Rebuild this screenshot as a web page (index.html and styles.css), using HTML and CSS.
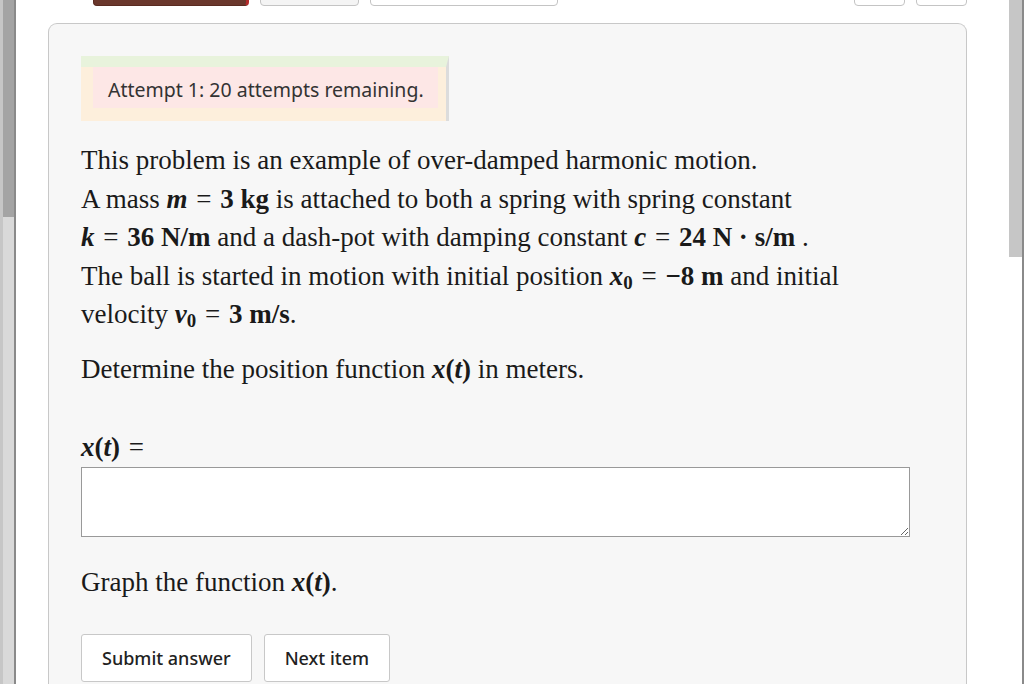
FILE: index.html
```html
<!DOCTYPE html>
<html lang="en">
<head>
    <meta charset="UTF-8">
    <meta name="viewport" content="width=device-width, initial-scale=1.0">
    <title>Over-damped harmonic motion</title>
    <link rel="stylesheet" href="styles.css">
</head>
<body>
    <div class="frame">
        <div class="side-rail"><div class="rail-thumb"></div></div>

        <div class="main">
            <div class="toolbar">
                <span class="tool tool-primary"></span>
                <span class="tool tool-small"></span>
                <span class="tool tool-wide"></span>
                <span class="spacer"></span>
                <span class="tool tool-icon"></span>
                <span class="tool tool-icon"></span>
            </div>

            <div class="card">
                <div class="attempts">
                    <span class="attempts-text">Attempt 1: 20 attempts remaining.</span>
                </div>

                <p class="problem">
                    This problem is an example of over-damped harmonic motion.<br>
                    A mass <span class="mi">m</span> <span class="mo">=</span> <span class="mn">3 kg</span> is attached to both a spring with spring constant<br>
                    <span class="mi">k</span> <span class="mo">=</span> <span class="mn">36 N/m</span> and a dash-pot with damping constant <span class="mi">c</span> <span class="mo">=</span> <span class="mn">24 N · s/m</span> .<br>
                    The ball is started in motion with initial position <span class="mi">x</span><sub class="mn">0</sub> <span class="mo">=</span> <span class="mn">−8 m</span> and initial<br>
                    velocity <span class="mi">v</span><sub class="mn">0</sub> <span class="mo">=</span> <span class="mn">3 m/s</span>.
                </p>

                <p class="problem">Determine the position function <span class="mi">x</span><span class="mn">(</span><span class="mi">t</span><span class="mn">)</span> in meters.</p>

                <p class="problem label"><span class="mi">x</span><span class="mn">(</span><span class="mi">t</span><span class="mn">)</span> <span class="mo">=</span></p>
                <textarea class="answer"></textarea>

                <p class="problem graph">Graph the function <span class="mi">x</span><span class="mn">(</span><span class="mi">t</span><span class="mn">)</span>.</p>

                <div class="actions">
                    <button class="btn">Submit answer</button>
                    <button class="btn">Next item</button>
                </div>
            </div>
        </div>

        <div class="scrollbar"><div class="scroll-thumb"></div></div>
    </div>
</body>
</html>
```

FILE: styles.css
```css
body {
    margin: 0;
    padding: 0;
    background: #fff;
    overflow: hidden;
    font-family: "Noto Sans", "Open Sans", sans-serif;
    color: #222;
}
.frame {
    display: flex;
    height: 100vh;
}

.side-rail {
    width: 16px;
    background: #d9d9d9;
    border-left: 3px solid #c6c6c6;
    border-right: 2px solid #8a8a8a;
    box-sizing: border-box;
}
.rail-thumb {
    height: 217px;
    background: #a4a4a4;
}

.main {
    flex: 1;
    padding: 0 42px 0 32px;
}

.toolbar {
    display: flex;
    gap: 11px;
    height: 7px;
    margin-left: 45px;
    overflow: hidden;
}
.tool {
    display: block;
    height: 40px;
    margin-top: -34px;
    border: 1px solid #c4c4c4;
    border-radius: 4px;
    background: #fff;
    box-sizing: border-box;
}
.tool-primary {
    width: 156px;
    background: #6a372c;
    border-color: #5a2a20;
    border-right: 3px solid #b22a2a;
}
.tool-small { width: 99px; background: #f4f4f4; }
.tool-wide { width: 188px; }
.tool-icon { width: 51px; }
.spacer { flex: 1; }

.card {
    margin-top: 16px;
    background: #f7f7f7;
    border: 1px solid #c8c8c8;
    border-bottom: none;
    border-radius: 9px 9px 0 0;
    padding: 32px 32px 40px;
    height: 700px;
}

.attempts {
    display: inline-block;
    background: #fdefdc;
    border-top: 11px solid #e8f3dc;
    border-right: 3px solid #dcdcdc;
    padding: 0 8px 0 12px;
    height: 54px;
}
.attempts-text {
    display: inline-block;
    background: #fde7e6;
    padding: 9px 14px 4px 15px;
    font-size: 19.5px;
    line-height: 28px;
    color: #333;
}

.problem {
    margin: 20px 0 0;
    font-family: "Liberation Serif", "Times New Roman", serif;
    font-size: 27px;
    line-height: 38.5px;
    color: #1a1a1a;
}
.problem + .problem { margin-top: 16px; }
.problem.label { margin-top: 40px; }
.problem.graph { margin-top: 26px; }

.mi {
    font-style: italic;
    font-weight: bold;
}
.mn {
    font-weight: bold;
}
.mo {
    font-weight: normal;
    margin: 0 2px;
}
sub.mn {
    font-size: 70%;
    line-height: 0;
    vertical-align: -4px;
}

.answer {
    display: block;
    width: 829px;
    height: 70px;
    margin: 0;
    border: 1px solid #999;
    box-sizing: border-box;
    background: #fff;
}

.actions {
    display: flex;
    gap: 12px;
    margin-top: 33px;
}
.btn {
    height: 48px;
    padding: 0 20px;
    background: #fff;
    border: 1px solid #c8c8c8;
    border-radius: 3px;
    font-family: "Noto Sans", "Open Sans", sans-serif;
    font-size: 18px;
    font-weight: 500;
    color: #222;
}

.scrollbar {
    width: 15px;
    border-right: 2px solid #8a8a8a;
    box-sizing: border-box;
    background: #fff;
}
.scroll-thumb {
    height: 257px;
    background: #c6c6c6;
}
```
